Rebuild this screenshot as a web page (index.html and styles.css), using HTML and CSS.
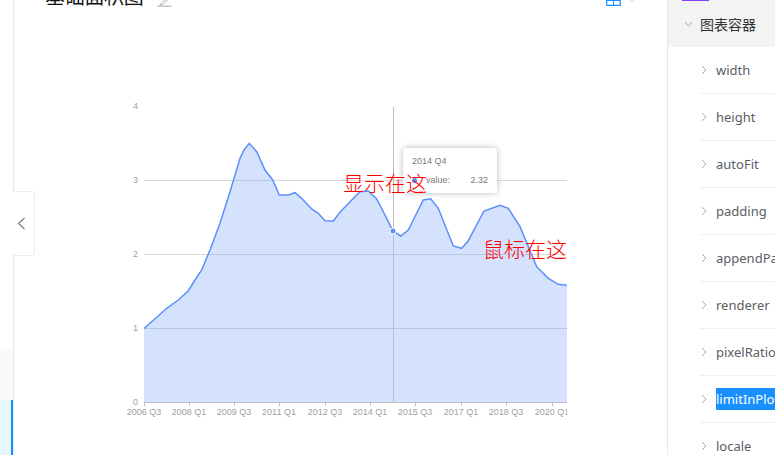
FILE: index.html
```html
<!DOCTYPE html>
<html lang="zh">
<head>
<meta charset="utf-8">
<title>基础面积图</title>
<link rel="stylesheet" href="styles.css">
</head>
<body>
<div class="page">
  <aside class="side">
    <div class="side-spacer"></div>
    <div class="side-item"></div>
    <div class="side-item active"></div>
    <button class="collapse" aria-label="收起">
      <svg width="9" height="13" viewBox="0 0 9 13"><path d="M7.5 1 L1.5 6.5 L7.5 12" fill="none" stroke="#6b7a8c" stroke-width="1.1"/></svg>
    </button>
  </aside>

  <main class="main">
    <header class="head">
      <h1 class="title">基础面积图</h1>
      <svg class="edit" width="15" height="9" viewBox="0 0 15 9"><path d="M3 4.5 L7.5 0 M10.5 0 L6 4.5 L3 4.8 L3 4" fill="none" stroke="#b5b5b5" stroke-width="1"/><path d="M0 6.2 H14.5" stroke="#b5b5b5" stroke-width="1.2"/></svg>
      <div class="tools">
        <svg width="15" height="6" viewBox="0 0 15 6"><path d="M0.7 0 V5.3 H14.3 V0 M7.5 0 V5.3 M0.7 0.5 H14.3" fill="none" stroke="#1890ff" stroke-width="1.2"/></svg>
        <span class="tool-dot"></span>
      </div>
    </header>

    <div class="chart">
      <svg class="plot" width="447" height="325" viewBox="120 95 447 325">
        <g class="grid">
          <path d="M144 180.5 H567 M144 254.5 H567 M144 328.5 H567"/>
        </g>
        <path class="area" d="M144 328.5 L160 314.3 L166.7 308.3 L178.3 300 L188.3 290.7 L195 280 L201.7 270 L210 250 L220 223.3 L230 191.7 L240 158.3 L244 150 L249.3 143.3 L256.7 151.7 L265 170 L272.7 180 L279.3 195 L288.3 195 L295 192.7 L301.7 198.3 L311.7 209 L318.3 213.3 L325 220.7 L333.3 221 L340 212.3 L350 201.7 L360 191.7 L368.3 191 L376.7 199 L385 215 L392.7 230.7 L400.7 236 L408.3 230 L423.3 200 L430.7 198.7 L438.3 208.3 L453.3 246 L461.7 248.3 L468.3 240.7 L484 211 L500 205.3 L508.3 208.3 L520 226.7 L536.7 266.7 L540 270 L548.3 278.3 L558.3 284.3 L567 285.3 V402 H144 Z"/>
        <path class="line" d="M144 328.5 L160 314.3 L166.7 308.3 L178.3 300 L188.3 290.7 L195 280 L201.7 270 L210 250 L220 223.3 L230 191.7 L240 158.3 L244 150 L249.3 143.3 L256.7 151.7 L265 170 L272.7 180 L279.3 195 L288.3 195 L295 192.7 L301.7 198.3 L311.7 209 L318.3 213.3 L325 220.7 L333.3 221 L340 212.3 L350 201.7 L360 191.7 L368.3 191 L376.7 199 L385 215 L392.7 230.7 L400.7 236 L408.3 230 L423.3 200 L430.7 198.7 L438.3 208.3 L453.3 246 L461.7 248.3 L468.3 240.7 L484 211 L500 205.3 L508.3 208.3 L520 226.7 L536.7 266.7 L540 270 L548.3 278.3 L558.3 284.3 L567 285.3"/>
        <path class="axis" d="M144 402.5 H567 M144.5 402 V406 M189.5 402 V406 M234.5 402 V406 M279.5 402 V406 M325.5 402 V406 M370.5 402 V406 M415.5 402 V406 M461.5 402 V406 M506.5 402 V406 M552.5 402 V406"/>
        <path class="cross" d="M393.5 107 V402"/>
        <circle class="marker" cx="393" cy="231" r="3"/>
        <g class="ylabels">
          <text x="138" y="109">4</text>
          <text x="138" y="183">3</text>
          <text x="138" y="257">2</text>
          <text x="138" y="331">1</text>
          <text x="138" y="405">0</text>
        </g>
        <g class="xlabels">
          <text x="144" y="415">2006 Q3</text>
          <text x="189" y="415">2008 Q1</text>
          <text x="234" y="415">2009 Q3</text>
          <text x="279" y="415">2011 Q1</text>
          <text x="325" y="415">2012 Q3</text>
          <text x="370" y="415">2014 Q1</text>
          <text x="415" y="415">2015 Q3</text>
          <text x="461" y="415">2017 Q1</text>
          <text x="506" y="415">2018 Q3</text>
          <text x="552" y="415">2020 Q1</text>
        </g>
      </svg>

      <div class="tooltip">
        <div class="tip-title">2014 Q4</div>
        <div class="tip-row">
          <span class="tip-dot"></span>
          <span class="tip-name">value:</span>
          <span class="tip-val">2.32</span>
        </div>
      </div>

      <span class="note note-a">显示在这</span>
      <span class="note note-b">鼠标在这</span>
    </div>
  </main>

  <aside class="panel">
    <div class="panel-mark"></div>
    <div class="group">
      <svg width="9" height="6" viewBox="0 0 9 6"><path d="M1 1 L4.5 5 L8 1" fill="none" stroke="#a3a8b3" stroke-width="1"/></svg>
      <span>图表容器</span>
    </div>
    <ul class="props">
      <li class="prop"><svg class="chev" width="6" height="10" viewBox="0 0 6 10"><path d="M1 1 L5 5 L1 9" fill="none" stroke="#a3a8b3" stroke-width="1"/></svg><span class="prop-name">width</span></li>
      <li class="prop"><svg class="chev" width="6" height="10" viewBox="0 0 6 10"><path d="M1 1 L5 5 L1 9" fill="none" stroke="#a3a8b3" stroke-width="1"/></svg><span class="prop-name">height</span></li>
      <li class="prop"><svg class="chev" width="6" height="10" viewBox="0 0 6 10"><path d="M1 1 L5 5 L1 9" fill="none" stroke="#a3a8b3" stroke-width="1"/></svg><span class="prop-name">autoFit</span></li>
      <li class="prop"><svg class="chev" width="6" height="10" viewBox="0 0 6 10"><path d="M1 1 L5 5 L1 9" fill="none" stroke="#a3a8b3" stroke-width="1"/></svg><span class="prop-name">padding</span></li>
      <li class="prop"><svg class="chev" width="6" height="10" viewBox="0 0 6 10"><path d="M1 1 L5 5 L1 9" fill="none" stroke="#a3a8b3" stroke-width="1"/></svg><span class="prop-name">appendPadding</span></li>
      <li class="prop"><svg class="chev" width="6" height="10" viewBox="0 0 6 10"><path d="M1 1 L5 5 L1 9" fill="none" stroke="#a3a8b3" stroke-width="1"/></svg><span class="prop-name">renderer</span></li>
      <li class="prop"><svg class="chev" width="6" height="10" viewBox="0 0 6 10"><path d="M1 1 L5 5 L1 9" fill="none" stroke="#a3a8b3" stroke-width="1"/></svg><span class="prop-name">pixelRatio</span></li>
      <li class="prop"><svg class="chev" width="6" height="10" viewBox="0 0 6 10"><path d="M1 1 L5 5 L1 9" fill="none" stroke="#a3a8b3" stroke-width="1"/></svg><span class="prop-name selected">limitInPlot</span></li>
      <li class="prop"><svg class="chev" width="6" height="10" viewBox="0 0 6 10"><path d="M1 1 L5 5 L1 9" fill="none" stroke="#a3a8b3" stroke-width="1"/></svg><span class="prop-name">locale</span></li>
    </ul>
  </aside>
</div>
</body>
</html>
```
FILE: styles.css
```css
html, body {
  margin: 0;
  padding: 0;
  height: 100%;
  overflow: hidden;
  background: #fff;
}
.page {
  display: flex;
  height: 455px;
  width: 775px;
  overflow: hidden;
  font-family: "Noto Sans", "Noto Sans CJK SC", sans-serif;
}

/* left rail */
.side {
  position: relative;
  flex: 0 0 14px;
  display: flex;
  flex-direction: column;
  box-sizing: border-box;
  border-right: 1px solid #e8e8e8;
}
.side-spacer { height: 348px; }
.side-item { height: 52px; background: #fafafa; }
.side-item.active {
  flex: 1;
  background: #e6f7ff;
  border-right: 2px solid #1890ff;
}
.collapse {
  position: absolute;
  left: 13px;
  top: 191px;
  width: 22px;
  height: 65px;
  padding: 0 0 0 4px;
  display: flex;
  align-items: center;
  background: #fff;
  border: 1px solid #ececec;
  border-left: 0;
  border-radius: 0 4px 4px 0;
  box-sizing: border-box;
}

/* main column */
.main {
  flex: 1;
  min-width: 0;
  display: flex;
  flex-direction: column;
}
.head {
  display: flex;
  align-items: flex-start;
  height: 9px;
  padding-left: 31px;
}
.title {
  margin: -19px 0 0;
  font-family: "Noto Sans CJK SC", sans-serif;
  font-size: 20px;
  line-height: 30px;
  font-weight: 400;
  letter-spacing: -0.3px;
  color: #111;
  white-space: nowrap;
}
.edit { margin-left: 13px; margin-top: 0; }
.tools {
  display: flex;
  margin-left: auto;
  margin-right: 33px;
  gap: 9px;
}
.tool-dot {
  width: 4px;
  height: 1px;
  background: #e6e0f5;
}

/* chart */
.chart {
  position: relative;
  flex: 1;
  padding: 86px 0 0 106px;
}
.plot { display: block; }
.grid path { stroke: #d9d9d9; stroke-width: 1; fill: none; }
.area { fill: #5b8ff9; fill-opacity: .26; }
.line { fill: none; stroke: #5b8ff9; stroke-width: 1.5; }
.axis { fill: none; stroke: #bfbfbf; stroke-width: 1; }
.cross { fill: none; stroke: #bdbdbd; stroke-width: 1; }
.marker { fill: #5b8ff9; stroke: #fff; stroke-width: 1; }
.ylabels text,
.xlabels text {
  font-family: "Liberation Sans", sans-serif;
  font-size: 9px;
  fill: #a0a0a0;
}
.ylabels text { text-anchor: end; }
.xlabels text { text-anchor: middle; }

.tooltip {
  position: absolute;
  left: 389px;
  top: 139px;
  width: 94px;
  height: 45px;
  box-sizing: border-box;
  padding: 8px 9px;
  background: #fff;
  border-radius: 3px;
  box-shadow: 0 0 6px rgba(0, 0, 0, .28);
  font-family: "Liberation Sans", sans-serif;
  font-size: 9px;
  color: #7a7a7a;
}
.tip-title { line-height: 11px; margin-bottom: 8px; }
.tip-row { display: flex; align-items: center; line-height: 11px; }
.tip-dot {
  width: 5px;
  height: 5px;
  border-radius: 50%;
  background: #5b8ff9;
  margin-right: 9px;
}
.tip-name { flex: 1; }

.note {
  position: absolute;
  font-family: "Noto Sans CJK SC", sans-serif;
  font-size: 21px;
  line-height: 26px;
  font-weight: 300;
  color: #ff0000;
  white-space: nowrap;
}
.note-a { left: 329px; top: 160px; }
.note-b { left: 469px; top: 226px; }

/* right panel */
.panel {
  flex: 0 0 108px;
  box-sizing: border-box;
  border-left: 1px solid #e8e8e8;
  position: relative;
  overflow: hidden;
}
.panel-mark {
  position: absolute;
  left: 14px;
  top: 0;
  width: 27px;
  height: 1px;
  background: #8a3ffc;
}
.group {
  height: 47px;
  box-sizing: border-box;
  padding-left: 16px;
  display: flex;
  align-items: center;
  gap: 7px;
  background: #f3f3f3;
  font-family: "Noto Sans CJK SC", sans-serif;
  font-size: 14px;
  color: #333;
  white-space: nowrap;
}
.props {
  list-style: none;
  margin: 0 0 0 32px;
  padding: 0;
}
.prop {
  height: 47px;
  box-sizing: border-box;
  display: flex;
  align-items: center;
  border-bottom: 1px solid #efefef;
  font-size: 13px;
  color: #5a5e66;
  white-space: nowrap;
}
.chev { flex: none; margin: 0 9px 0 1px; }
.prop-name { line-height: 22px; }
.selected {
  background: #1890ff;
  color: #fff;
}
```
